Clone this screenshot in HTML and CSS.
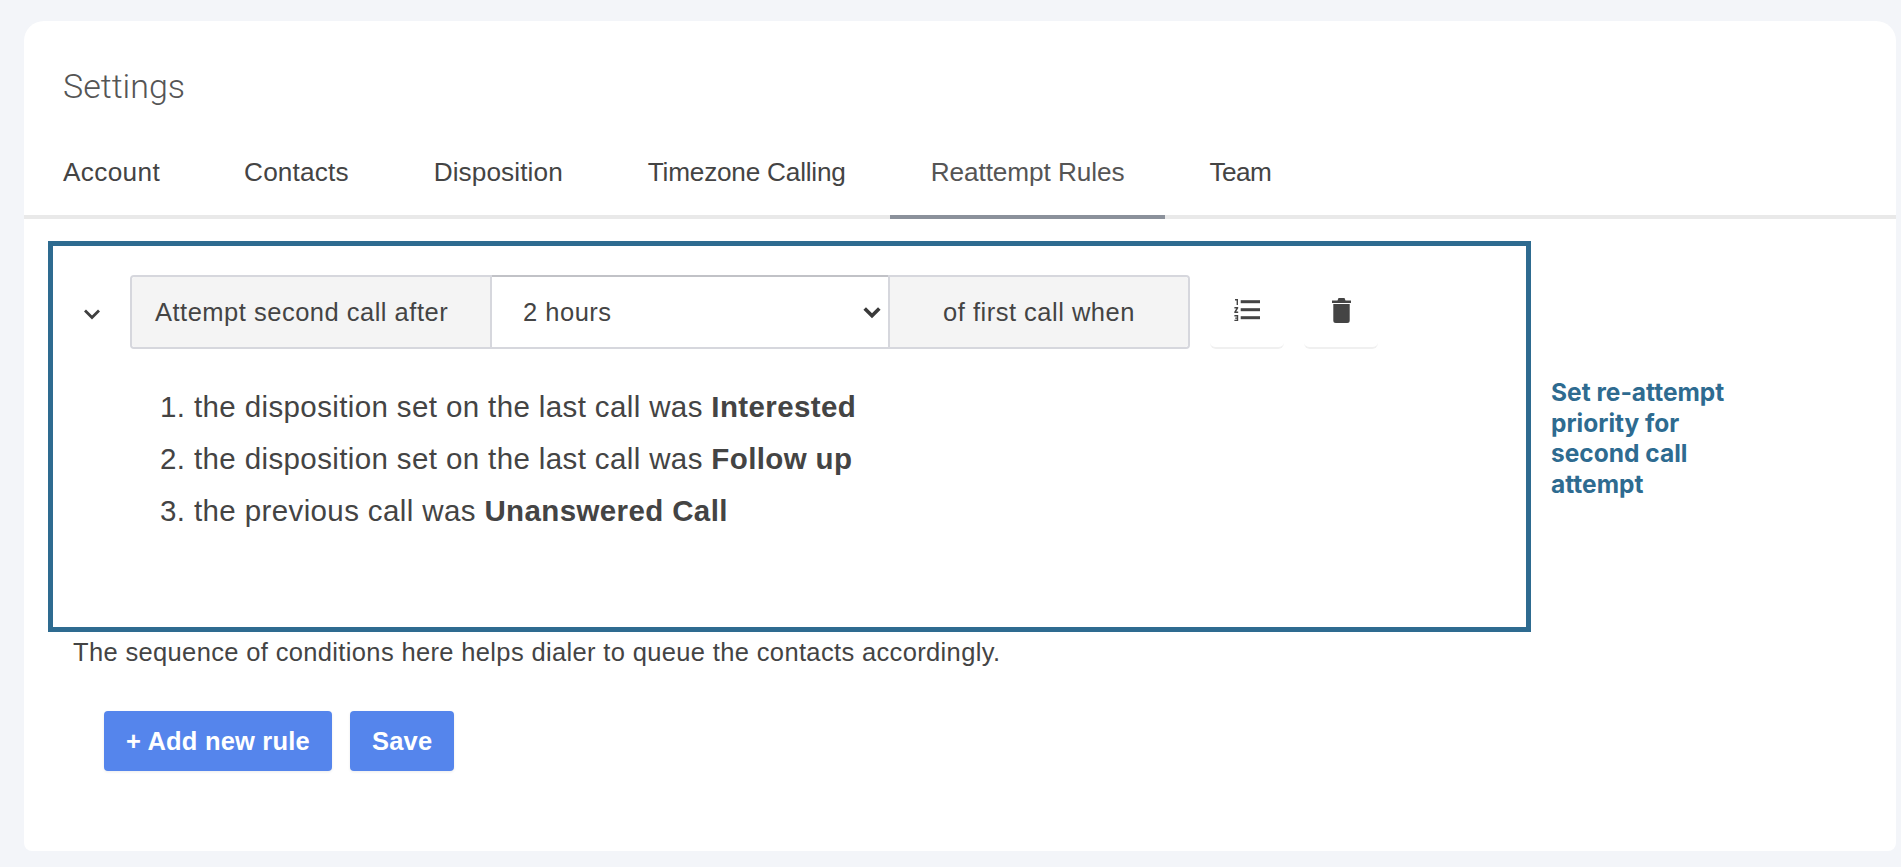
FILE: index.html
```html
<!DOCTYPE html>
<html lang="en">
<head>
<meta charset="utf-8">
<title>Settings</title>
<link rel="stylesheet" href="styles.css">
</head>
<body>
<main class="card">
  <h1 class="title">Settings</h1>
  <nav class="tabs">
    <a class="tab tab-account">Account</a>
    <a class="tab tab-contacts">Contacts</a>
    <a class="tab tab-disposition">Disposition</a>
    <a class="tab tab-timezone">Timezone Calling</a>
    <a class="tab tab-reattempt active">Reattempt Rules</a>
    <a class="tab tab-team">Team</a>
  </nav>
  <div class="rule-row">
    <section class="rule-box">
      <div class="rule-head">
        <svg class="chevron" viewBox="0 0 18 12"><path d="M2 2.5 9 9.5 16 2.5" fill="none" stroke="#3f3f3f" stroke-width="2.8"/></svg>
        <div class="group">
          <span class="addon first">Attempt second call after</span>
          <span class="select">2 hours
            <svg class="sel-chevron" viewBox="0 0 18 13"><path d="M1.7 2.5 9 9.8 16.3 2.5" fill="none" stroke="#3a3a3a" stroke-width="3.6"/></svg>
          </span>
          <span class="addon last">of first call when</span>
        </div>
        <button class="icon-btn">
          <svg class="list-icon" viewBox="0 0 26 22">
            <rect x="6.7" y="1.2" width="19.3" height="3" fill="#444"/>
            <rect x="6.7" y="9.2" width="19.3" height="3" fill="#444"/>
            <rect x="6.7" y="17.2" width="19.3" height="3" fill="#444"/>
            <path d="M1 0h3v6H2.6V1.4H1zM.4 8h3.8v1.3L2.2 12.6h2V14H.3v-1.3l2-3.3H.4zM.4 16h3.8v6H.4v-1.3h2.4v-1H1.2v-1.3h1.6v-1H.4z" fill="#444"/>
          </svg>
        </button>
        <button class="icon-btn">
          <svg class="trash-icon" viewBox="0 0 19 25">
            <path d="M0 2.5h5.5L6.5 0h6l1 2.5H19V5H0z" fill="#444"/>
            <path d="M1.3 6h16.4v16.5A2.5 2.5 0 0 1 15.2 25H3.8a2.5 2.5 0 0 1-2.5-2.5z" fill="#444"/>
          </svg>
        </button>
      </div>
      <ol class="conditions">
        <li>the disposition set on the last call was <b>Interested</b></li>
        <li>the disposition set on the last call was <b>Follow up</b></li>
        <li>the previous call was <b>Unanswered Call</b></li>
      </ol>
    </section>
    <p class="note">Set re-attempt priority for second call attempt</p>
  </div>
  <p class="hint">The sequence of conditions here helps dialer to queue the contacts accordingly.</p>
  <div class="actions">
    <button class="btn">+ Add new rule</button>
    <button class="btn">Save</button>
  </div>
</main>
</body>
</html>
```
FILE: styles.css
```css
* { box-sizing: border-box; }
html, body { margin: 0; height: 100%; }
body {
  background: #f3f5f9;
  padding: 21px 5px 16px 24px;
  font-family: "Liberation Sans", Arial, sans-serif;
  color: #444;
  overflow: hidden;
}
.card {
  height: 830px;
  background: #fff;
  border-radius: 20px 20px 8px 8px;
  padding-top: 45px;
}
.title {
  margin: 0 0 0 39px;
  font-family: Roboto, "Liberation Sans", sans-serif;
  font-weight: 300;
  font-size: 34px;
  line-height: 40px;
  height: 40px;
  color: #555;
}
.tabs {
  display: flex;
  gap: 3px;
  margin-top: 24px;
  height: 89px;
  border-bottom: 4px solid #e9e9e9;
}
.tab {
  display: block;
  padding: 24px 41px 0;
  font-size: 26.2px;
  line-height: 36px;
  height: 89px;
  color: #444;
}
.tab:first-child { padding-left: 39px; padding-right: 40px; }
.tab-account { letter-spacing: .35px; }
.tab-contacts { letter-spacing: .15px; }
.tab-disposition { letter-spacing: .1px; }
.tab-timezone { letter-spacing: -.22px; }
.tab-reattempt { letter-spacing: -.08px; }
.tab-team { letter-spacing: -.6px; }
.tab.active { border-bottom: 4px solid #8b919b; color: #555; }
.rule-row {
  display: flex;
  margin: 22px 0 0 24px;
}
.rule-box {
  width: 1483px;
  height: 391px;
  border: 5px solid #2e6b90;
  padding: 29px 0 0 30px;
}
.rule-head {
  display: flex;
  align-items: flex-start;
}
.chevron { width: 18px; height: 12px; margin-top: 33px; flex: none; }
.group {
  display: flex;
  margin-left: 29px;
  width: 1060px;
  height: 74px;
  border: 2px solid #d6d7dd;
  border-radius: 4px;
  font-size: 25.5px;
  letter-spacing: .5px;
  line-height: 70px;
  color: #444;
}
.addon { background: #f4f4f4; display: block; }
.addon.first { width: 360px; padding-left: 23px; border-right: 2px solid #d6d7dd; border-radius: 3px 0 0 3px; }
.addon.last { flex: 1; text-align: center; border-left: 2px solid #d6d7dd; border-radius: 0 3px 3px 0; }
.select {
  width: 396px;
  padding: 0 7px 0 31px;
  display: flex;
  align-items: center;
  justify-content: space-between;
  margin-top: -2px;
  border-top: 2px solid #c1c2c7;
  background: #fff;
}
.sel-chevron { width: 18px; height: 13px; }
.icon-btn {
  width: 74px;
  height: 74px;
  padding: 0 0 2px;
  margin-left: 20px;
  background: #fff;
  border: 0;
  border-bottom: 2px solid #f0f0f0;
  border-radius: 6px;
  display: flex;
  align-items: center;
  justify-content: center;
}
.list-icon { width: 26px; height: 22px; }
.trash-icon { width: 19px; height: 25px; }
.conditions {
  margin: 32px 0 0;
  padding: 0 0 0 111px;
  font-size: 29.5px;
  letter-spacing: .38px;
  line-height: 52px;
  color: #444;
}
.conditions b { color: #444; }
.note {
  margin: 136px 0 0 20px;
  width: 190px;
  font-family: Inter, "Liberation Sans", sans-serif;
  font-size: 24.5px;
  line-height: 30.6px;
  font-weight: 700;
  color: #2e6b90;
}
.hint {
  margin: 5px 0 0 49px;
  font-size: 25.5px;
  letter-spacing: .35px;
  line-height: 30px;
  color: #444;
}
.actions {
  display: flex;
  gap: 18px;
  margin: 44px 0 0 80px;
}
.btn {
  height: 60px;
  padding: 0 22px;
  background: #5585ec;
  color: #fff;
  border: 0;
  border-radius: 4px;
  font: 700 25.5px "Liberation Sans", Arial, sans-serif;
  letter-spacing: .2px;
  box-shadow: 0 1px 3px rgba(0, 0, 0, .08);
}
```
